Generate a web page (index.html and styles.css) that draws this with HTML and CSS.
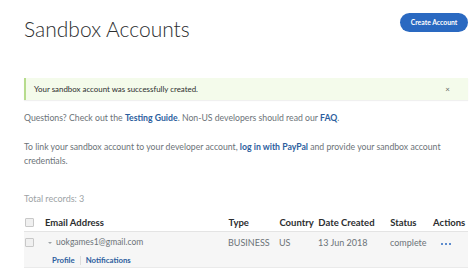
FILE: index.html
```html
<html>
<head>
<link rel="stylesheet" href="styles.css">
</head>
<body>
  <div class="page">
    <div class="header">
      <h1 class="title">Sandbox Accounts</h1>
      <a class="btn" href="#">Create Account</a>
    </div>

    <div class="alert">
      <span>Your sandbox account was successfully created.</span>
      <span class="close">&times;</span>
    </div>

    <p class="info">Questions? Check out the <a href="#">Testing Guide</a>. Non-US developers should read our <a href="#">FAQ</a>.</p>
    <p class="info">To link your sandbox account to your developer account, <a href="#">log in with PayPal</a> and provide your sandbox account<br>credentials.</p>

    <div class="total">Total records: 3</div>

    <div class="table">
      <div class="row head">
        <div class="c-check"><span class="box"></span></div>
        <div class="c-email">Email Address</div>
        <div class="c-type">Type</div>
        <div class="c-country">Country</div>
        <div class="c-date">Date Created</div>
        <div class="c-status">Status</div>
        <div class="c-actions">Actions</div>
      </div>
      <div class="item">
        <div class="row">
          <div class="c-check"><span class="box"></span></div>
          <div class="c-email"><span class="caret"></span><span class="mail">uokgames1@gmail.com</span></div>
          <div class="c-type">BUSINESS</div>
          <div class="c-country">US</div>
          <div class="c-date">13 Jun 2018</div>
          <div class="c-status">complete</div>
          <div class="c-actions"><span class="dots"><i></i><i></i><i></i></span></div>
        </div>
        <div class="sub">
          <a href="#">Profile</a><span class="sep"></span><a href="#">Notifications</a>
        </div>
      </div>
    </div>
  </div>
</body>
</html>
```

FILE: styles.css
```css
body
{
    margin: 0;
    font-family: Lato, "Open Sans", "Liberation Sans", sans-serif;
    color: #6c7378;
    background: #fff;
}

.page
{
    padding: 13px 6px 0 24px;
}

.header
{
    display: flex;
    justify-content: space-between;
    align-items: flex-start;
}

.title
{
    margin: 5px 0 0 0;
    font-weight: 300;
    font-size: 21px;
    line-height: 22px;
    color: #2c2e2f;
}

.btn
{
    display: block;
    width: 68px;
    height: 19px;
    line-height: 19px;
    text-align: center;
    border-radius: 10px;
    background: #2a69c1;
    color: #fff;
    font-size: 6.8px;
    font-weight: 700;
    text-decoration: none;
}

.alert
{
    margin-top: 38px;
    height: 22px;
    display: flex;
    align-items: center;
    justify-content: space-between;
    padding: 0 18px 0 8px;
    background: #f4fbeb;
    border-left: 2px solid #b7dc8d;
    box-shadow: 0 1px 1px rgba(0,0,0,.06);
    font-size: 7.9px;
    color: #2c2e2f;
}

.close
{
    font-size: 8px;
    color: #666;
}

.info
{
    margin: 11px 0 0 0;
    font-size: 8.7px;
    line-height: 14px;
    padding-right: 18px;
}

.info + .info
{
    margin-top: 15px;
}

.info a, .sub a
{
    color: #2c5e9e;
    font-weight: 700;
    text-decoration: none;
}

.total
{
    margin-top: 25px;
    font-size: 9px;
    color: #9da3a6;
}

.table
{
    margin-top: 9px;
}

.row
{
    display: flex;
    align-items: center;
    height: 20px;
    font-size: 9px;
}

.head
{
    height: 18px;
    font-weight: 700;
    color: #2c2e2f;
    font-size: 9.5px;
    border-bottom: 1px solid #e4e4e4;
}

.item
{
    background: #f6f6f6;
    border-bottom: 1px solid #eaeaea;
    height: 35px;
}

.c-check
{
    width: 20px;
    padding-left: 1px;
}

.box
{
    display: block;
    width: 7px;
    height: 7px;
    border: 1px solid #c8c8c8;
    border-radius: 1px;
    background: #f0f0f0;
}

.c-email
{
    width: 184px;
    display: flex;
    align-items: center;
}

.item .c-email
{
    margin-left: -1px;
}

.mail
{
    font-size: 8.5px;
}

.caret
{
    display: inline-block;
    width: 0;
    height: 0;
    border-left: 2px solid transparent;
    border-right: 2px solid transparent;
    border-top: 2px solid #9da3a6;
    margin: 1px 4px 0 4px;
}

.c-type { width: 51px; }
.c-country { width: 39px; }
.c-date { width: 72px; }
.c-status { width: 43px; }
.c-actions { width: 35px; }

.dots
{
    display: flex;
    gap: 2px;
    padding-left: 8px;
    margin-top: 3px;
}

.dots i
{
    display: block;
    width: 2px;
    height: 2px;
    border-radius: 1px;
    background: #2a69c1;
}

.sub
{
    display: flex;
    align-items: center;
    padding-left: 28px;
    font-size: 7.8px;
    height: 16px;
}

.sep
{
    display: inline-block;
    width: 1px;
    height: 9px;
    background: #ddd;
    margin: 0 5px;
}
```
